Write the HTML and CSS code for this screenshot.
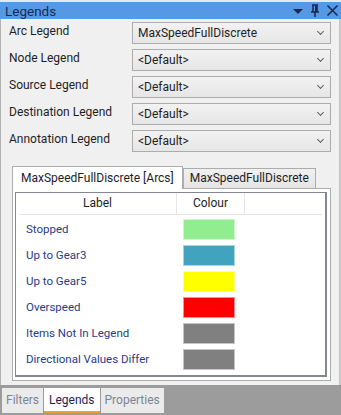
FILE: index.html
```html
<!DOCTYPE html>
<html>
<head>
<meta charset="utf-8">
<link rel="stylesheet" href="styles.css">
</head>
<body>
<div class="window">
  <div class="titlebar">
    <span class="title">Legends</span>
    <span class="tools">
      <svg width="12" height="12" viewBox="0 0 12 12"><path d="M1 4 L11 4 L6 9 Z" fill="#1b2a52"/></svg>
      <svg width="12" height="14" viewBox="0 0 12 14"><path d="M3 1 H9 M4 1 V8 M8 1 V8 M2 8 H10 M6 8 V13" stroke="#1b2a52" stroke-width="1.6" fill="none"/><rect x="6" y="1" width="2" height="7" fill="#1b2a52"/></svg>
      <svg width="13" height="13" viewBox="0 0 13 13"><path d="M1.5 1.5 L11.5 11.5 M11.5 1.5 L1.5 11.5" stroke="#1b2a52" stroke-width="1.6"/></svg>
    </span>
  </div>
  <div class="panel">
    <div class="form">
      <div class="label">Arc Legend</div>
      <div class="combo"><span>MaxSpeedFullDiscrete</span><i class="chev"></i></div>
      <div class="label">Node Legend</div>
      <div class="combo"><span>&lt;Default&gt;</span><i class="chev"></i></div>
      <div class="label">Source Legend</div>
      <div class="combo"><span>&lt;Default&gt;</span><i class="chev"></i></div>
      <div class="label">Destination Legend</div>
      <div class="combo"><span>&lt;Default&gt;</span><i class="chev"></i></div>
      <div class="label">Annotation Legend</div>
      <div class="combo"><span>&lt;Default&gt;</span><i class="chev"></i></div>
    </div>
    <div class="tabctl">
      <div class="tabhead">
        <div class="tab active">MaxSpeedFullDiscrete [Arcs]</div>
        <div class="tab">MaxSpeedFullDiscrete</div>
      </div>
      <div class="tabbody">
        <div class="list">
          <div class="lhead">
            <div class="hcell c1">Label</div>
            <div class="hcell c2">Colour</div>
            <div class="hcell c3"></div>
          </div>
          <div class="row"><div class="name">Stopped</div><div class="sw" style="background:#90ee90"></div></div>
          <div class="row"><div class="name">Up to Gear3</div><div class="sw" style="background:#41a3bd"></div></div>
          <div class="row"><div class="name">Up to Gear5</div><div class="sw" style="background:#ffff00"></div></div>
          <div class="row"><div class="name">Overspeed</div><div class="sw" style="background:#ff0000"></div></div>
          <div class="row"><div class="name">Items Not In Legend</div><div class="sw" style="background:#808080"></div></div>
          <div class="row"><div class="name">Directional Values Differ</div><div class="sw" style="background:#808080"></div></div>
        </div>
      </div>
    </div>
  </div>
  <div class="bottombar">
    <div class="btab">Filters</div>
    <div class="btab active">Legends</div>
    <div class="btab">Properties</div>
  </div>
</div>
</body>
</html>
```
FILE: styles.css
```css
* { box-sizing: border-box; }
html, body { margin: 0; padding: 0; }
body {
  width: 341px; height: 415px; overflow: hidden;
  font-family: Roboto, "Open Sans", sans-serif;
  font-size: 11.5px;
  color: #1e1e1e;
  background: #9c9c9c;
}
.window { width: 341px; height: 415px; display: flex; flex-direction: column; }
.titlebar {
  height: 19px;
  border-top: 2px solid #e8e8e8;
  background: #5599e4;
  display: flex; align-items: center; justify-content: space-between;
  padding: 0 2px 0 5px;
  color: #1b2a52;
  font-size: 13.5px;
}
.title { line-height: 16px; }
.tools { display: flex; align-items: center; gap: 5px; }
.tools svg { display: block; }
.panel {
  height: 366px;
  background: #f0f0f0;
  border-left: 1px solid #b4b4b4;
  border-right: 2px solid #c8c8c8;
  padding: 3px 0 0 8px;
  display: flex; flex-direction: column;
}
.form {
  display: grid;
  grid-template-columns: 123px 199px;
  grid-auto-rows: 22px;
  row-gap: 5px;
}
.label { line-height: 16px; padding-top: 1px; white-space: nowrap; font-size: 12px; }
.combo {
  border: 1px solid #acacac;
  background: linear-gradient(#f2f2f2, #e6e6e6);
  display: flex; align-items: center; justify-content: space-between;
  padding: 0 7px 0 5px;
  font-size: 12px;
}
.chev {
  width: 5px; height: 5px;
  border-right: 1px solid #606060; border-bottom: 1px solid #606060;
  transform: rotate(45deg); margin-top: -3px;
}
.tabctl { margin-top: 13px; margin-left: 3px; width: 319px; }
.tabhead { display: flex; align-items: flex-end; height: 23px; }
.tab {
  height: 20px;
  border: 1px solid #acacac; border-bottom: none;
  background: linear-gradient(#f0f0f0, #e5e5e5);
  padding: 0 6px 0 6px;
  line-height: 19px;
  white-space: nowrap;
  font-size: 12px;
}
.tab.active {
  height: 23px; background: #fff; padding: 0 8px;
  position: relative; top: 1px; z-index: 1;
  line-height: 22px;
}
.tabbody {
  height: 193px;
  border: 1px solid #acacac;
  background: #fff;
  padding: 3px 3px 3px 2px;
}
.list {
  height: 185px;
  border: 1px solid #828790;
  border-right-width: 2px;
  border-bottom-width: 2px;
  background: #fff;
  padding: 0 3px;
}
.lhead { display: flex; height: 22px; border-bottom: 1px solid #e5e5e5; margin: 0 0 1px 0; }
.hcell { text-align: center; line-height: 20px; color: #1e1e1e; border-right: 1px solid #e5e5e5; font-size: 12px; }
.c1 { width: 158px; }
.c2 { width: 68px; }
.c3 { flex: 1; border-right: none; }
.row { display: flex; align-items: center; height: 26px; }
.name { width: 164px; padding-left: 7px; color: #283b8c; white-space: nowrap; font-size: 11.5px; }
.sw { width: 52px; height: 21px; border: 1px solid rgba(255,255,255,0.55); }
.bottombar { flex: 1; display: flex; align-items: flex-start; padding: 3px 0 0 2px; gap: 1px; }
.btab {
  height: 25px;
  background: #ebebeb;
  color: #7a8594;
  padding: 0 4px;
  line-height: 24px;
  font-size: 12px;
}
.btab.active {
  background: #fff; color: #1e1e50;
  border-bottom: 2px solid #f0a030;
  padding: 0 5px;
}
```
